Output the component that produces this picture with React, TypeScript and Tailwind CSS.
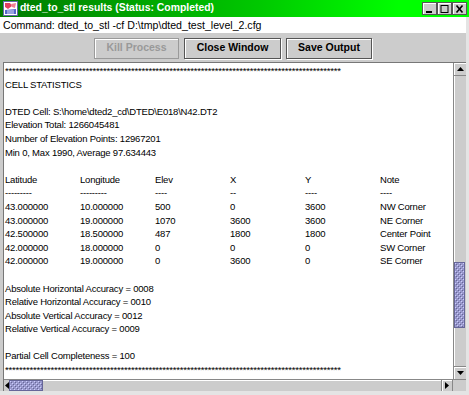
import React from "react";

type Dir = "up" | "down" | "left" | "right";

function Tri({ dir }: { dir: Dir }) {
  const vertical = dir === "up" || dir === "down";
  const w = vertical ? 7 : 4;
  const h = vertical ? 4 : 7;
  const pts = {
    up: "0,4 7,4 3.5,0",
    down: "0,0 7,0 3.5,4",
    left: "4,0 4,7 0,3.5",
    right: "0,0 0,7 4,3.5",
  }[dir];
  return (
    <svg width={w} height={h} viewBox={`0 0 ${w} ${h}`}>
      <polygon points={pts} fill="#000" />
    </svg>
  );
}

function Bumps({ id }: { id: string }) {
  return (
    <svg width="100%" height="100%" className="block">
      <defs>
        <pattern id={id} width="4" height="4" patternUnits="userSpaceOnUse">
          <rect x="0" y="0" width="1" height="1" fill="#ccccff" />
          <rect x="2" y="2" width="1" height="1" fill="#ccccff" />
          <rect x="1" y="1" width="1" height="1" fill="#666699" />
          <rect x="3" y="3" width="1" height="1" fill="#666699" />
        </pattern>
      </defs>
      <rect width="100%" height="100%" fill={`url(#${id})`} />
    </svg>
  );
}

function TitleBtn({ kind }: { kind: "min" | "max" | "close" }) {
  return (
    <div className="w-[15px] h-[13px] bg-[#cccccc] border border-[#555555] shadow-[inset_1px_1px_0_#ffffff] flex items-center justify-center">
      <svg width="9" height="8" viewBox="0 0 9 8">
        {kind === "min" && <rect x="1" y="6" width="6" height="2" fill="#000" />}
        {kind === "max" && (
          <rect x="1" y="0.5" width="7" height="7" fill="none" stroke="#000" strokeWidth="1" />
        )}
        {kind === "close" && (
          <path d="M1.5 0.5 L7.5 7.5 M7.5 0.5 L1.5 7.5" stroke="#000" strokeWidth="1.6" />
        )}
      </svg>
    </div>
  );
}

function AppIcon() {
  return (
    <svg width="15" height="15" viewBox="0 0 15 15">
      <rect x="0.5" y="0.5" width="14" height="14" fill="#ffffff" stroke="#6666aa" />
      <path d="M2 2 L7 2 L9 5 L5 8 L2 6 Z" fill="#e04060" />
      <path d="M8 3 L13 2 L12 7 L9 6 Z" fill="#f08090" />
      <path d="M2 9 L13 8 L13 13 L2 13 Z" fill="#5566cc" />
      <path d="M4 10 L11 10 M4 12 L11 12" stroke="#ffffff" strokeWidth="0.8" />
    </svg>
  );
}

const STARS = "*".repeat(96);

const rows: string[][] = [
  ["Latitude", "Longitude", "Elev", "X", "Y", "Note"],
  ["---------", "---------", "----", "--", "----", "----"],
  ["43.000000", "10.000000", "500", "0", "3600", "NW Corner"],
  ["43.000000", "19.000000", "1070", "3600", "3600", "NE Corner"],
  ["42.500000", "18.500000", "487", "1800", "1800", "Center Point"],
  ["42.000000", "18.000000", "0", "0", "0", "SW Corner"],
  ["42.000000", "19.000000", "0", "3600", "0", "SE Corner"],
];

function Line({ children }: { children?: React.ReactNode }) {
  return <div className="h-[13.6px] leading-[13.6px] whitespace-pre">{children ?? " "}</div>;
}

export default function App() {
  return (
    <div className="w-[469px] h-[395px] bg-[#cccccc] flex flex-col overflow-hidden font-['Liberation_Sans',Arial,sans-serif] text-black select-none">
      {/* Title bar */}
      <div className="h-[17px] flex items-center bg-[linear-gradient(to_right,#007a00,#00c800_55%,#00ff00_85%)] pl-[3px] pr-[2px]">
        <AppIcon />
        <div className="ml-[2px] text-white font-bold text-[10.4px] leading-none whitespace-nowrap">
          dted_to_stl results (Status: Completed)
        </div>
        <div className="ml-auto flex">
          <TitleBtn kind="min" />
          <TitleBtn kind="max" />
          <TitleBtn kind="close" />
        </div>
      </div>

      <div className="flex-1 flex min-h-0">
        <div className="flex-1 flex flex-col min-w-0">
          {/* Command row */}
          <div className="h-[16px] bg-white flex items-center pl-[3px] text-[10.6px] whitespace-nowrap leading-none">
            {"Command: dted_to_stl -cf D:\\tmp\\dted_test_level_2.cfg"}
          </div>

          {/* Buttons */}
          <div className="h-[29px] flex items-center justify-center gap-[5px] pt-[1px]">
            <div className="w-[85px] h-[21px] border border-[#9a9a9a] shadow-[inset_1px_1px_0_#ffffff] flex items-center justify-center text-[10.5px] font-bold text-[#999999]">
              Kill Process
            </div>
            <div className="w-[97px] h-[21px] border border-[#555555] shadow-[inset_1px_1px_0_#ffffff,1px_1px_0_#ffffff] flex items-center justify-center text-[10.5px] font-bold">
              Close Window
            </div>
            <div className="w-[86px] h-[21px] border border-[#555555] shadow-[inset_1px_1px_0_#ffffff,1px_1px_0_#ffffff] flex items-center justify-center text-[10.5px] font-bold">
              Save Output
            </div>
          </div>

          {/* Scroll pane */}
          <div className="flex-1 flex flex-col ml-[3px] border-l border-t border-[#777777] min-h-0">
            <div className="flex-1 flex min-h-0">
              <div className="flex-1 bg-white pl-[1px] pt-[1px] overflow-hidden text-[9.5px] tracking-[-0.2px]">
                <Line>{STARS}</Line>
                <Line>CELL STATISTICS</Line>
                <Line />
                <Line>{"DTED Cell: S:\\home\\dted2_cd\\DTED\\E018\\N42.DT2"}</Line>
                <Line>Elevation Total: 1266045481</Line>
                <Line>Number of Elevation Points: 12967201</Line>
                <Line>Min 0, Max 1990, Average 97.634443</Line>
                <Line />
                {rows.map((r, i) => (
                  <div key={i} className="grid grid-cols-[75px_75px_75px_75px_75px_75px] h-[13.6px] leading-[13.6px] whitespace-pre">
                    {r.map((c, j) => (
                      <span key={j}>{c}</span>
                    ))}
                  </div>
                ))}
                <Line />
                <Line>Absolute Horizontal Accuracy = 0008</Line>
                <Line>Relative Horizontal Accuracy = 0010</Line>
                <Line>Absolute Vertical Accuracy = 0012</Line>
                <Line>Relative Vertical Accuracy = 0009</Line>
                <Line />
                <Line>Partial Cell Completeness = 100</Line>
                <Line>{STARS}</Line>
              </div>

              {/* Vertical scrollbar */}
              <div className="w-[13px] flex flex-col bg-[#cccccc] border-l border-[#888888]">
                <div className="h-[13px] border-b border-[#888888] shadow-[inset_1px_1px_0_#ffffff] flex items-center justify-center">
                  <Tri dir="up" />
                </div>
                <div className="flex-1 flex flex-col shadow-[inset_1px_0_0_#ffffff]">
                  <div className="h-[186px]" />
                  <div className="h-[66px] bg-[#9999cc] border border-[#666699] mr-[1px]">
                    <Bumps id="vb" />
                  </div>
                </div>
                <div className="h-[13px] border-t border-[#888888] shadow-[inset_1px_1px_0_#ffffff] flex items-center justify-center">
                  <Tri dir="down" />
                </div>
              </div>
            </div>

            {/* Horizontal scrollbar */}
            <div className="h-[12px] flex bg-[#cccccc] border-t border-[#888888]">
              <div className="w-[5px] flex items-center justify-center">
                <Tri dir="left" />
              </div>
              <div className="w-[34px] bg-[#9999cc] border border-[#666699]">
                <Bumps id="hb" />
              </div>
              <div className="flex-1 shadow-[inset_0_1px_0_#ffffff]" />
              <div className="w-[12px] border-l border-r border-[#888888] shadow-[inset_1px_1px_0_#ffffff] flex items-center justify-center">
                <Tri dir="right" />
              </div>
              <div className="w-[13px]" />
            </div>
          </div>
        </div>
        <div className="w-[3px] bg-[#e4e4e4]" />
      </div>
      <div className="h-[4px] bg-[#e4e4e4]" />
    </div>
  );
}
